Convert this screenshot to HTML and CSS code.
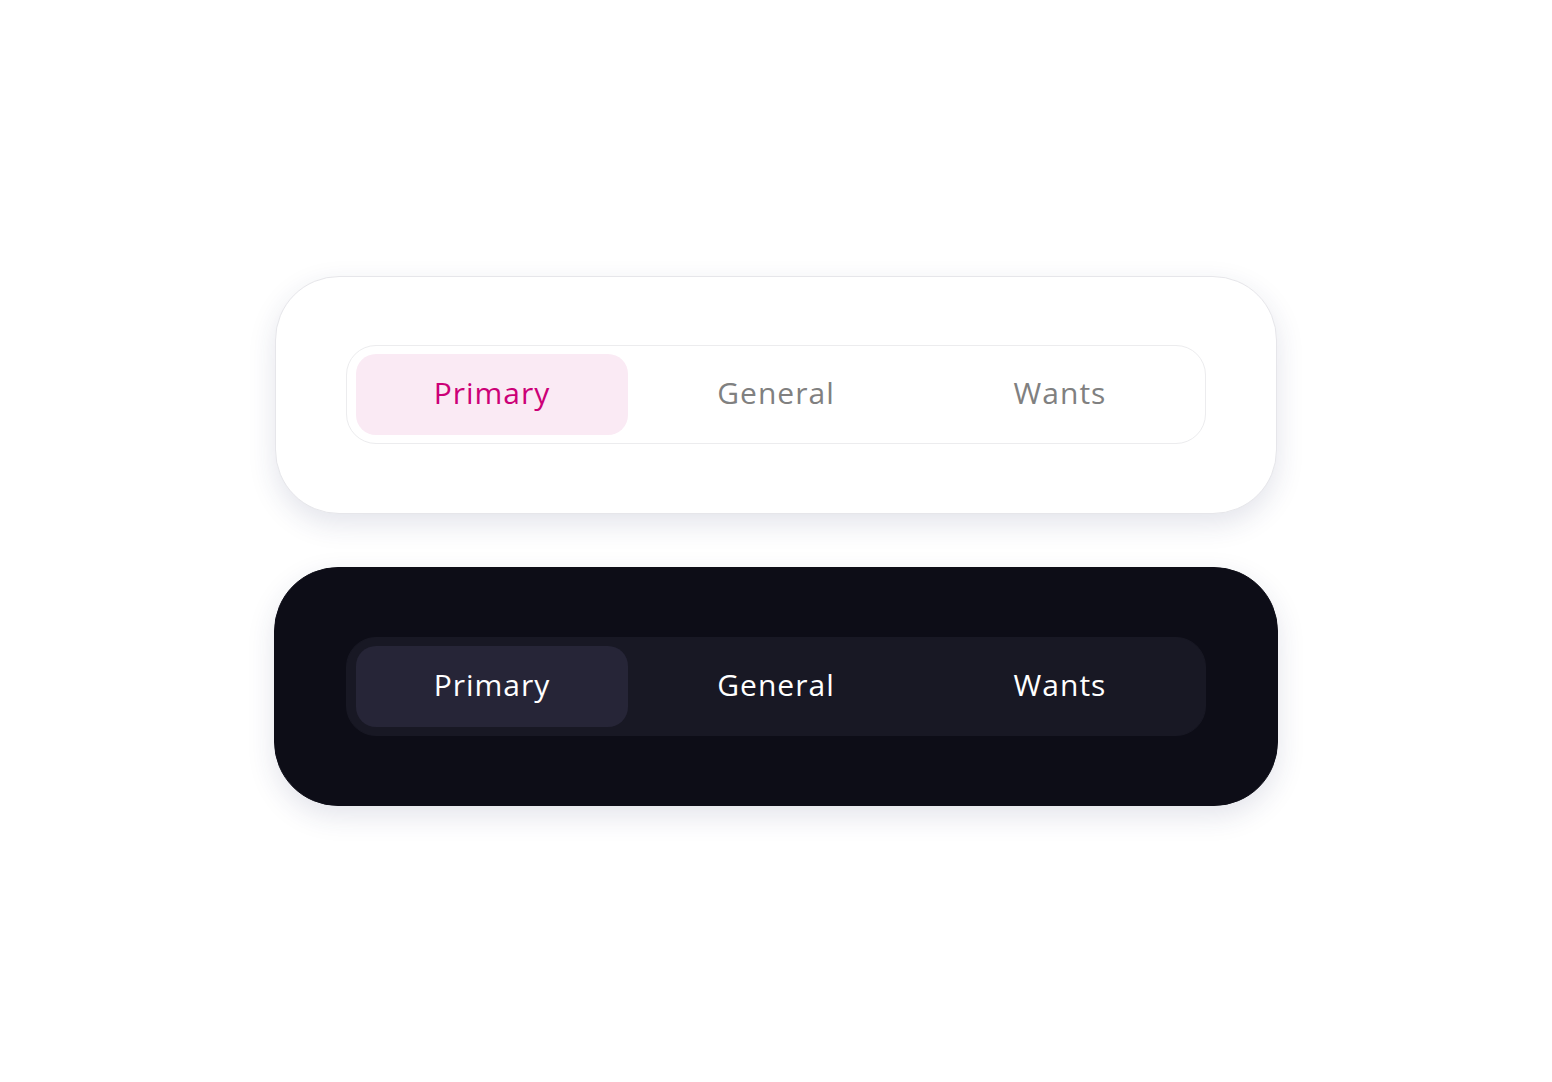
FILE: index.html
```html
<!DOCTYPE html>
<html lang="en">
<head>
<meta charset="utf-8">
<title>Tabs</title>
<link rel="stylesheet" href="styles.css">
</head>
<body>
<main class="stage">
  <section class="card card-light">
    <div class="tabs">
      <div class="tab active">Primary</div>
      <div class="tab">General</div>
      <div class="tab">Wants</div>
    </div>
  </section>
  <section class="card card-dark">
    <div class="tabs">
      <div class="tab active">Primary</div>
      <div class="tab">General</div>
      <div class="tab">Wants</div>
    </div>
  </section>
</main>
</body>
</html>
```
FILE: styles.css
```css
html, body {
  margin: 0;
  padding: 0;
  background: #ffffff;
}
.stage {
  width: 1552px;
  height: 1082px;
  display: flex;
  flex-direction: column;
  align-items: center;
  justify-content: center;
  gap: 53px;
  font-family: "Open Sans", "Inter", sans-serif;
}
.card {
  box-sizing: border-box;
  width: 1002px;
  padding: 68px 70px 69px;
  border-radius: 64px;
  border: 1px solid #e6e6ea;
  box-shadow: 0 10px 28px rgba(40, 50, 100, 0.13);
}
.card-light {
  background: #ffffff;
}
.card-dark {
  width: 1004px;
  padding: 69px 71px;
  background: #0d0d17;
  border-color: #0d0d17;
}
.tabs {
  display: grid;
  grid-template-columns: repeat(3, 1fr);
  gap: 12px;
  padding: 8px 9px;
  border-radius: 30px;
}
.card-light .tabs {
  border: 1px solid #ececee;
  background: #ffffff;
}
.card-dark .tabs {
  border: 1px solid #181824;
  background: #181824;
}
.tab {
  box-sizing: border-box;
  height: 81px;
  padding-bottom: 4px;
  display: flex;
  align-items: center;
  justify-content: center;
  border-radius: 20px;
  font-size: 30px;
  font-weight: 500;
  letter-spacing: 1px;
  line-height: 1;
}
.card-light .tab {
  color: #808080;
}
.card-light .tab.active {
  background: #faeaf4;
  color: #cc0077;
}
.card-dark .tab {
  color: #ffffff;
}
.card-dark .tab.active {
  background: #262537;
}
```
